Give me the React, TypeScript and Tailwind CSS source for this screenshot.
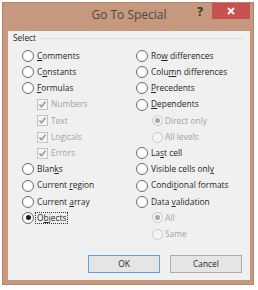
import React from 'react';

type Item = { label: React.ReactNode; kind: 'radio' | 'check' | 'subradio'; checked?: boolean; disabled?: boolean; focus?: boolean };

const u = (s: string) => <span className="underline underline-offset-[1px]">{s}</span>;

const left: Item[] = [
  { label: <>{u('C')}omments</>, kind: 'radio' },
  { label: <>C{u('o')}nstants</>, kind: 'radio' },
  { label: <>{u('F')}ormulas</>, kind: 'radio' },
  { label: 'Numbers', kind: 'check', checked: true, disabled: true },
  { label: 'Text', kind: 'check', checked: true, disabled: true },
  { label: 'Logicals', kind: 'check', checked: true, disabled: true },
  { label: 'Errors', kind: 'check', checked: true, disabled: true },
  { label: <>Blan{u('k')}s</>, kind: 'radio' },
  { label: <>Current {u('r')}egion</>, kind: 'radio' },
  { label: <>Current {u('a')}rray</>, kind: 'radio' },
  { label: <>O{u('b')}jects</>, kind: 'radio', checked: true, focus: true },
];

const right: Item[] = [
  { label: <>Ro{u('w')} differences</>, kind: 'radio' },
  { label: <>Colu{u('m')}n differences</>, kind: 'radio' },
  { label: <>{u('P')}recedents</>, kind: 'radio' },
  { label: <>{u('D')}ependents</>, kind: 'radio' },
  { label: 'Direct only', kind: 'subradio', checked: true, disabled: true },
  { label: 'All levels', kind: 'subradio', disabled: true },
  { label: <>La{u('s')}t cell</>, kind: 'radio' },
  { label: <>Visible cells onl{u('y')}</>, kind: 'radio' },
  { label: <>Condi{u('t')}ional formats</>, kind: 'radio' },
  { label: <>Data {u('v')}alidation</>, kind: 'radio' },
  { label: 'All', kind: 'subradio', checked: true, disabled: true },
  { label: 'Same', kind: 'subradio', disabled: true },
];

const Row: React.FC<{ item: Item }> = ({ item }) => {
  const { kind, checked, disabled, focus, label } = item;
  return (
    <div className={`h-[16.2px] flex items-center ${kind === 'check' ? 'pl-[15px]' : kind === 'subradio' ? 'pl-[16px]' : ''}`}>
      {kind === 'check' ? (
        <div className="w-[11px] h-[11px] border border-[#c4c4c4] bg-[#f4f4f4] flex items-center justify-center">
          {checked && (
            <svg width="9" height="9" viewBox="0 0 9 9">
              <polyline points="1.5,4.5 3.5,6.8 7.5,1.8" fill="none" stroke="#9a9a9a" strokeWidth="1.6" />
            </svg>
          )}
        </div>
      ) : (
        <div
          className={`${kind === 'subradio' ? 'w-[11px] h-[11px]' : 'w-[12px] h-[12px]'} rounded-full border flex items-center justify-center ${
            disabled ? 'border-[#c8c8c8] bg-[#f4f4f4]' : 'border-[#6a6a6a] bg-white'
          }`}
        >
          {checked && <div className={`w-[5px] h-[5px] rounded-full ${disabled ? 'bg-[#a8a8a8]' : 'bg-[#1a1a1a]'}`} />}
        </div>
      )}
      <span
        className={`${kind === 'subradio' ? 'ml-[2px]' : 'ml-[3px]'} ${disabled ? 'text-[#a3a3a3]' : 'text-[#262626]'} ${
          focus ? 'outline outline-1 outline-dotted outline-[#333] outline-offset-[1px]' : ''
        }`}
      >
        {label}
      </span>
    </div>
  );
};

export default function App() {
  return (
    <div className="w-[258px] h-[290px] bg-white pt-[2px] pl-[2px] text-[8.4px] leading-none" style={{ fontFamily: '"Open Sans", sans-serif' }}>
      <div className="w-[252px] h-[283px] bg-[#c6987d] border border-[#b3866b] flex flex-col pl-[5px] pr-[3px] pb-[4px]">
        {/* Title bar */}
        <div className="relative h-[28px] shrink-0 flex items-center justify-center pb-[5px]">
          <span className="text-[12px] text-[#4a4a4a]">Go To Special</span>
          <span className="absolute right-[47px] top-[3px] text-[12px] font-bold text-[#333]">?</span>
          <div className="absolute top-0 right-0 w-[38px] h-[16px] bg-[#c75050] flex items-center justify-center">
            <svg width="8" height="8" viewBox="0 0 8 8">
              <path d="M1 1L7 7M7 1L1 7" stroke="white" strokeWidth="1.8" />
            </svg>
          </div>
        </div>

        {/* Body */}
        <div className="flex-1 bg-[#f0f0f0] flex flex-col pl-[5px] pr-[7px] pb-[7px]">
          <div className="h-[12px] mt-[1px] flex items-center gap-[4px]">
            <span className="text-[#262626]">Select</span>
            <div className="flex-1 h-px bg-[#dadada]" />
          </div>

          <div className="mt-[4px] pl-[9px] grid grid-cols-[114px_1fr]">
            <div className="flex flex-col">
              {left.map((it, i) => (
                <Row key={i} item={it} />
              ))}
            </div>
            <div className="flex flex-col">
              {right.map((it, i) => (
                <Row key={i} item={it} />
              ))}
            </div>
          </div>

          <div className="mt-auto flex justify-end gap-[10px] pr-[1px]">
            <button className="w-[72px] h-[18px] bg-[#e5e5e5] border border-[#5aa4e6] text-[#262626]">OK</button>
            <button className="w-[72px] h-[18px] bg-[#e5e5e5] border border-[#adadad] text-[#262626]">Cancel</button>
          </div>
        </div>
      </div>
    </div>
  );
}
